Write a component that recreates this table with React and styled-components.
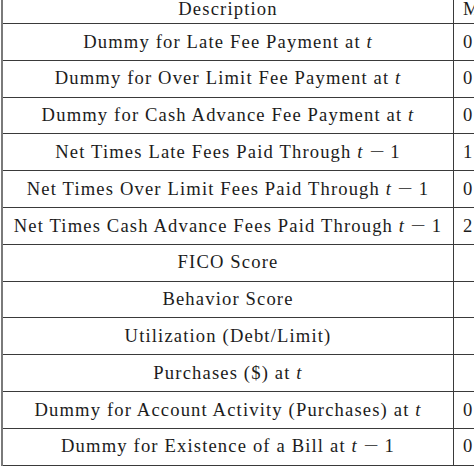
import React from "react";
import styled, { createGlobalStyle } from "styled-components";

const rows = [
  { text: ["Dummy for Late Fee Payment at ", "t"], value: "0" },
  { text: ["Dummy for Over Limit Fee Payment at ", "t"], value: "0" },
  { text: ["Dummy for Cash Advance Fee Payment at ", "t"], value: "0" },
  { text: ["Net Times Late Fees Paid Through ", "t", "-1"], value: "1" },
  { text: ["Net Times Over Limit Fees Paid Through ", "t", "-1"], value: "0" },
  { text: ["Net Times Cash Advance Fees Paid Through ", "t", "-1"], value: "2" },
  { text: ["FICO Score"], value: "" },
  { text: ["Behavior Score"], value: "" },
  { text: ["Utilization (Debt/Limit)"], value: "" },
  { text: ["Purchases ($) at ", "t"], value: "" },
  { text: ["Dummy for Account Activity (Purchases) at ", "t"], value: "0" },
  { text: ["Dummy for Existence of a Bill at ", "t", "-1"], value: "0" },
];

const GlobalStyle = createGlobalStyle`
  html, body {
    margin: 0;
    padding: 0;
    background: #ffffff;
    overflow: hidden;
  }
  body {
    font-family: "Liberation Serif", "DejaVu Serif", serif;
    color: #1c1c1c;
  }
`;

const Page = styled.div`
  width: 474px;
  height: 474px;
  overflow: hidden;
`;

const Table = styled.div`
  display: flex;
  flex-direction: column;
  width: 560px;
  margin-left: 1px;
  border-left: 2px solid #7a7a7a;
`;

const Row = styled.div`
  display: grid;
  grid-template-columns: 451px 1fr;
  height: ${(p) => (p.head ? "24px" : "36.8px")};
  box-sizing: border-box;
  border-bottom: ${(p) => (p.last ? "1.6px" : "1.3px")} solid #3a3a3a;
`;

const DescCell = styled.div`
  display: flex;
  align-items: ${(p) => (p.head ? "flex-end" : "center")};
  justify-content: center;
  padding-bottom: ${(p) => (p.head ? "4px" : "0")};
  font-size: 18.6px;
  letter-spacing: 1.15px;
  line-height: 1;
  white-space: pre;
  border-right: 1.3px solid #3a3a3a;
`;

const ValueCell = styled.div`
  display: flex;
  align-items: ${(p) => (p.head ? "flex-end" : "center")};
  padding-left: 9px;
  padding-bottom: ${(p) => (p.head ? "4px" : "0")};
  font-size: 18.6px;
  line-height: 1;
`;

const Var = styled.i`
  font-style: italic;
`;

const Minus = styled.span`
  display: inline-block;
  margin: 0 7px 0 8px;
  transform: scaleX(1.45);
`;

export default function App() {
  return (
    <Page>
      <GlobalStyle />
      <Table>
        <Row head>
          <DescCell head>Description</DescCell>
          <ValueCell head>M</ValueCell>
        </Row>
        {rows.map((r, i) => (
          <Row key={i} last={i === rows.length - 1}>
            <DescCell>
              <span>
                {r.text.map((part, j) =>
                  part === "t" ? (
                    <Var key={j}>t</Var>
                  ) : part === "-1" ? (
                    <React.Fragment key={j}>
                      <Minus>{"\u2212"}</Minus>1
                    </React.Fragment>
                  ) : (
                    part
                  )
                )}
              </span>
            </DescCell>
            <ValueCell>{r.value}</ValueCell>
          </Row>
        ))}
      </Table>
    </Page>
  );
}
